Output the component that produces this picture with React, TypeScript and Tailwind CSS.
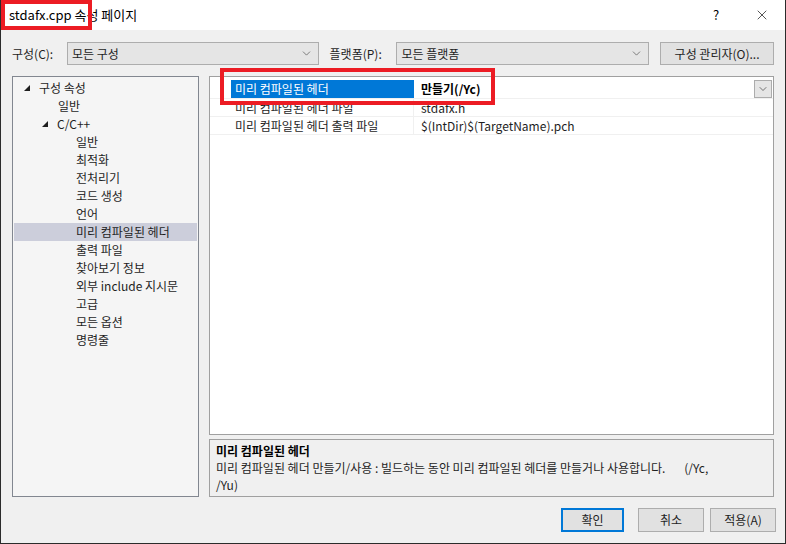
import { ChevronDown, X } from "lucide-react";

const font = { fontFamily: "'Noto Sans CJK KR', 'Noto Sans', sans-serif" };

const treeItems: { label: string; depth: number; expander?: boolean; selected?: boolean }[] = [
  { label: "구성 속성", depth: 0, expander: true },
  { label: "일반", depth: 1 },
  { label: "C/C++", depth: 1, expander: true },
  { label: "일반", depth: 2 },
  { label: "최적화", depth: 2 },
  { label: "전처리기", depth: 2 },
  { label: "코드 생성", depth: 2 },
  { label: "언어", depth: 2 },
  { label: "미리 컴파일된 헤더", depth: 2, selected: true },
  { label: "출력 파일", depth: 2 },
  { label: "찾아보기 정보", depth: 2 },
  { label: "외부 include 지시문", depth: 2 },
  { label: "고급", depth: 2 },
  { label: "모든 옵션", depth: 2 },
  { label: "명령줄", depth: 2 },
];

function Combo({ value, width }: { value: string; width: string }) {
  return (
    <div className={`${width} h-[23px] flex items-center justify-between border border-[#adadad] bg-[#e5e5e5] pl-[4px] pr-[5px]`}>
      <span>{value}</span>
      <ChevronDown size={13} strokeWidth={1.2} className="text-[#444]" />
    </div>
  );
}

function Expander() {
  return (
    <svg width="7" height="7" viewBox="0 0 7 7" className="mr-[8px]">
      <polygon points="6,0 6,6 0,6" fill="#1e1e1e" />
    </svg>
  );
}

export default function App() {
  return (
    <div className="w-[786px] h-[544px] bg-[#f0f0f0] text-[12px] leading-[18px] text-[#1e1e1e] flex flex-col border-l border-r border-b border-[#2b2b2b] overflow-hidden" style={font}>
      {/* title bar */}
      <div className="h-[30px] bg-white flex items-center shrink-0 relative">
        <div className="h-[30px] flex items-center pl-[8px] text-[13px] text-black">
          <span>stdafx.cpp 속성 페이지</span>
        </div>
        <div className="absolute left-0 top-0 w-[91px] h-[30px] border-[4px] border-[#ec1c24]" />
        <div className="ml-auto flex items-center">
          <span className="w-[46px] text-center text-[13px] text-black">?</span>
          <span className="w-[46px] flex justify-center">
            <X size={16} strokeWidth={1} className="text-black" />
          </span>
        </div>
      </div>

      {/* config row */}
      <div className="flex items-center h-[23px] mt-[12px] pl-[11px] pr-[11px]">
        <span className="w-[55px]">구성(C):</span>
        <Combo value="모든 구성" width="w-[252px]" />
        <span className="ml-[11px] w-[67px]">플랫폼(P):</span>
        <Combo value="모든 플랫폼" width="w-[253px]" />
        <button className="ml-[11px] w-[114px] h-[23px] border border-[#adadad] bg-[#e1e1e1]">구성 관리자(O)...</button>
      </div>

      {/* main area */}
      <div className="flex mt-[11px] pl-[11px] pr-[11px] h-[421px]">
        {/* tree */}
        <div className="w-[187px] h-[421px] border border-[#828790] bg-[#f5f5f5] pt-[2px] px-[1px]">
          {treeItems.map((t, i) => (
            <div
              key={i}
              className={`h-[18px] flex items-center ${t.selected ? "bg-[#cccedb]" : ""}`}
              style={{ paddingLeft: t.depth === 0 ? 10 : t.depth === 1 ? (t.expander ? 28 : 29) : 62 }}
            >
              {t.expander ? <Expander /> : t.depth === 1 ? <span className="w-[15px]" /> : null}
              <span>{t.label}</span>
            </div>
          ))}
        </div>

        {/* right column */}
        <div className="ml-[10px] flex-1 flex flex-col">
          <div className="h-[360px] border border-[#a0a0a0] bg-white pt-[2px] relative">
            <div className="flex h-[20px] items-center border-b border-[#f0f0f0]">
              <div className="w-[21px] h-full bg-white" />
              <div className="w-[183px] h-[18px] bg-[#0078d7] text-white flex items-center pl-[4px]">미리 컴파일된 헤더</div>
              <div className="flex-1 flex items-center pl-[7px] font-bold text-black">만들기(/Yc)</div>
              <div className="w-[18px] h-[18px] mr-[1px] border border-[#acacac] bg-[#e5e5e5] flex items-center justify-center">
                <ChevronDown size={12} strokeWidth={1.3} className="text-[#333]" />
              </div>
            </div>
            <div className="flex h-[18px] items-center border-b border-[#f0f0f0]">
              <div className="w-[21px] h-full" />
              <div className="w-[183px] pl-[4px] border-r border-[#f0f0f0] h-full flex items-center">미리 컴파일된 헤더 파일</div>
              <div className="flex-1 pl-[7px]">stdafx.h</div>
            </div>
            <div className="flex h-[18px] items-center border-b border-[#f0f0f0]">
              <div className="w-[21px] h-full" />
              <div className="w-[183px] pl-[4px] border-r border-[#f0f0f0] h-full flex items-center">미리 컴파일된 헤더 출력 파일</div>
              <div className="flex-1 pl-[7px]">$(IntDir)$(TargetName).pch</div>
            </div>
            <div className="absolute left-[10px] top-[-9px] w-[275px] h-[37px] border-[4px] border-[#ec1c24]" />
          </div>

          <div className="mt-[4px] h-[58px] border border-[#a0a0a0] bg-[#f0f0f0] px-[6px] pt-[2px] leading-[17px]">
            <div className="font-bold text-black">미리 컴파일된 헤더</div>
            <div>
              미리 컴파일된 헤더 만들기/사용 : 빌드하는 동안 미리 컴파일된 헤더를 만들거나 사용합니다.&nbsp;&nbsp;&nbsp;&nbsp;&nbsp;&nbsp;&nbsp;(/Yc,
            </div>
            <div>/Yu)</div>
          </div>
        </div>
      </div>

      {/* buttons */}
      <div className="flex justify-end items-center mt-[11px] pr-[9px]">
        <button className="w-[63px] h-[24px] border-2 border-[#0078d7] bg-[#e1e1e1]">확인</button>
        <button className="ml-[14px] w-[66px] h-[24px] border border-[#adadad] bg-[#e1e1e1]">취소</button>
        <button className="ml-[6px] w-[66px] h-[24px] border border-[#adadad] bg-[#e1e1e1]">적용(A)</button>
      </div>
    </div>
  );
}
